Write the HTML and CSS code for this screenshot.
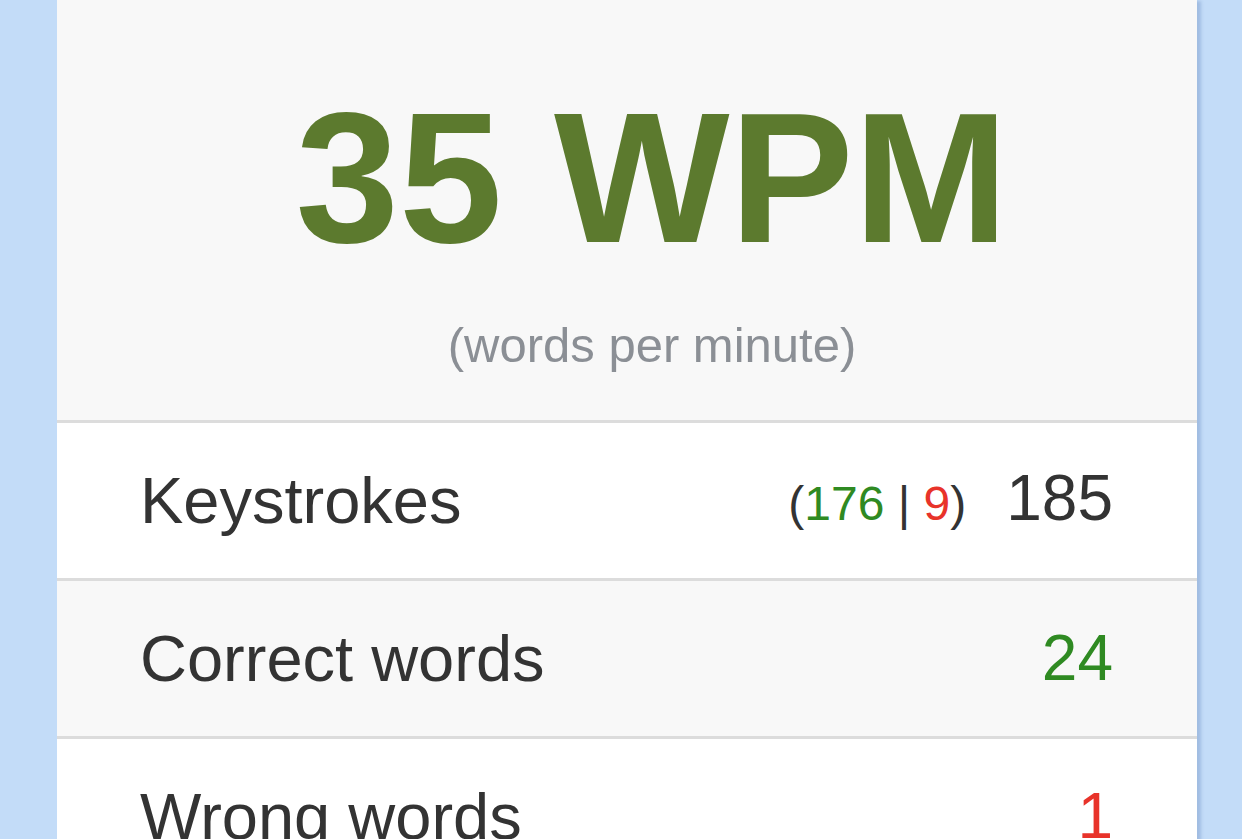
FILE: index.html
```html
<!DOCTYPE html>
<html>
<head>
<meta charset="utf-8">
<link rel="stylesheet" href="styles.css">
</head>
<body>
<div class="page">
  <div class="card">
    <div class="summary">
      <div class="wpm">35 WPM</div>
      <div class="sub">(words per minute)</div>
    </div>
    <div class="row">
      <div class="label">Keystrokes</div>
      <div class="value">
        <span class="detail">(<span class="good">176</span> | <span class="bad">9</span>)</span>
        <span class="num">185</span>
      </div>
    </div>
    <div class="row alt">
      <div class="label">Correct words</div>
      <div class="value"><span class="num good">24</span></div>
    </div>
    <div class="row">
      <div class="label">Wrong words</div>
      <div class="value"><span class="num bad">1</span></div>
    </div>
  </div>
</div>
</body>
</html>
```

FILE: styles.css
```css
html, body {
  margin: 0;
  padding: 0;
  height: 100%;
  overflow: hidden;
}
body {
  background: #c3dcf8;
  font-family: "Liberation Sans", Arial, Helvetica, sans-serif;
  color: #333333;
}
.page {
  padding-left: 57px;
}
.card {
  width: 1140px;
  height: 900px;
  background: #ffffff;
  box-shadow: 5px 0 3px -1px rgba(120, 150, 200, 0.45);
}
.summary {
  background: #f8f8f8;
  text-align: center;
  padding-top: 85px;
  padding-bottom: 50px;
  padding-left: 50px;
  border-bottom: 3px solid #dcdcdc;
}
.wpm {
  font-size: 186px;
  line-height: 186px;
  font-weight: bold;
  color: #5c7a2e;
}
.sub {
  margin-top: 50px;
  font-size: 49px;
  line-height: 49px;
  color: #8b8f95;
}
.row {
  height: 155px;
  display: flex;
  align-items: center;
  justify-content: space-between;
  padding: 0 84px 0 83px;
  border-bottom: 3px solid #dcdcdc;
  background: #ffffff;
}
.row.alt {
  background: #f8f8f8;
}
.label {
  font-size: 65px;
  line-height: 65px;
}
.value {
  display: flex;
  align-items: baseline;
  gap: 40px;
  line-height: 65px;
}
.detail {
  font-size: 48px;
}
.num {
  font-size: 64px;
}
.good {
  color: #2f8a22;
}
.bad {
  color: #e8332a;
}
```
